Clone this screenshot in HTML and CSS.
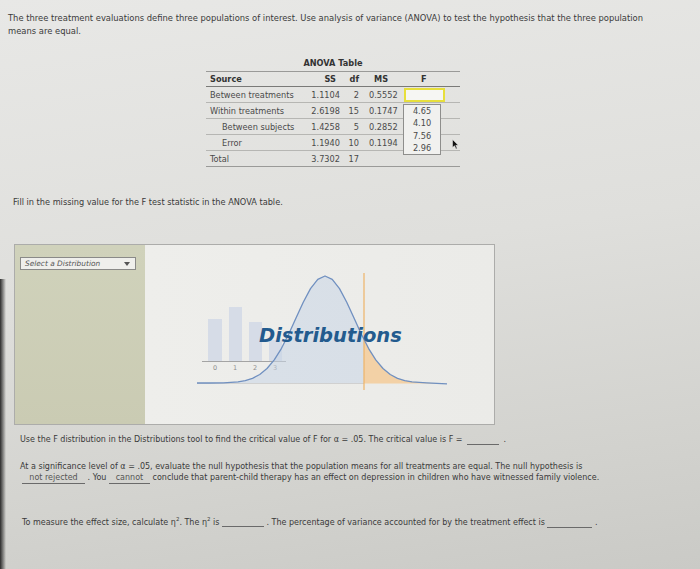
FILE: index.html
```html
<!DOCTYPE html>
<html>
<head>
<meta charset="utf-8">
<link rel="stylesheet" href="styles.css">
</head>
<body>
<div class="page">
  <p class="intro">The three treatment evaluations define three populations of interest. Use analysis of variance (ANOVA) to test the hypothesis that the three population<br>means are equal.</p>

  <div class="anova">
    <div class="anova-title">ANOVA Table</div>
    <table class="anova-table">
      <colgroup>
        <col class="c-src"><col class="c-ss"><col class="c-df"><col class="c-ms"><col class="c-f">
      </colgroup>
      <thead>
        <tr><th class="src">Source</th><th class="ss">SS</th><th class="df">df</th><th class="ms">MS</th><th class="f">F</th></tr>
      </thead>
      <tbody>
        <tr><td class="src">Between treatments</td><td class="ss">1.1104</td><td class="df">2</td><td class="ms">0.5552</td><td class="f"><div class="f-input"></div></td></tr>
        <tr><td class="src">Within treatments</td><td class="ss">2.6198</td><td class="df">15</td><td class="ms">0.1747</td><td class="f"></td></tr>
        <tr><td class="src sub">Between subjects</td><td class="ss">1.4258</td><td class="df">5</td><td class="ms">0.2852</td><td class="f"></td></tr>
        <tr><td class="src sub">Error</td><td class="ss">1.1940</td><td class="df">10</td><td class="ms">0.1194</td><td class="f"></td></tr>
        <tr><td class="src">Total</td><td class="ss">3.7302</td><td class="df">17</td><td class="ms"></td><td class="f"></td></tr>
      </tbody>
    </table>
    <ul class="f-options">
      <li>4.65</li><li>4.10</li><li>7.56</li><li>2.96</li>
    </ul>
    <svg class="cursor" width="7" height="11" viewBox="0 0 7 11"><path d="M0.5 0.5 L0.5 8.5 L2.5 6.8 L4 10 L5.2 9.4 L3.8 6.3 L6.3 6.3 Z" fill="#111" stroke="#eee" stroke-width="0.5"/></svg>
  </div>

  <p class="fill">Fill in the missing value for the F test statistic in the ANOVA table.</p>

  <div class="dist-panel">
    <div class="dist-side">
      <div class="dist-select"><span>Select a Distribution</span><span class="caret"></span></div>
    </div>
    <div class="dist-canvas">
      <svg width="349" height="179" viewBox="145 245 349 179">
        <rect x="208" y="319" width="14" height="42" fill="#d6dce7"/>
        <rect x="229" y="307" width="13" height="54" fill="#d6dce7"/>
        <rect x="249" y="322" width="13" height="39" fill="#d6dce7"/>
        <rect x="269" y="340" width="13" height="21" fill="#d6dce7"/>
        <line x1="202" y1="361.5" x2="286" y2="361.5" stroke="#a4a4a4" stroke-width="1"/>
        <text x="215" y="370" class="tick">0</text>
        <text x="235" y="370" class="tick">1</text>
        <text x="255" y="370" class="tick">2</text>
        <text x="275" y="370" class="tick">3</text>
        <polygon fill="#c8d5e6" fill-opacity="0.55" points="197,383 209,383 223.5,382.8 238,381.8 245.25,380.6 252.5,378.3 259.75,374.5 267,368.5 274.25,359.9 281.5,348.3 288.75,334 296,318.1 303.25,302.2 310.5,288.6 317.75,279.3 325,276 332.25,279.3 339.5,288.6 346.75,302.2 354,318.1 361.25,334 364,339.5 364,383"/>
        <polygon fill="#f5c88f" fill-opacity="0.75" points="364,339.5 368.5,348.3 375.75,359.9 383,368.5 390.25,374.5 397.5,378.3 404.75,380.6 412,381.8 426.5,382.8 447,383.5 364,383.5"/>
        <line x1="197" y1="383.5" x2="364" y2="383.5" stroke="#c9c9c9" stroke-width="0.8"/>
        <line x1="364" y1="273" x2="364" y2="390" stroke="#efb468" stroke-width="1.2"/>
        <polyline fill="none" stroke="#7090c0" stroke-width="1.3" stroke-linejoin="round" points="197,383 209,383 223.5,382.8 238,381.8 245.25,380.6 252.5,378.3 259.75,374.5 267,368.5 274.25,359.9 281.5,348.3 288.75,334 296,318.1 303.25,302.2 310.5,288.6 317.75,279.3 325,276 332.25,279.3 339.5,288.6 346.75,302.2 354,318.1 361.25,334 368.5,348.3 375.75,359.9 383,368.5 390.25,374.5 397.5,378.3 404.75,380.6 412,381.8 426.5,382.8 447,383.8"/>
        <text x="259" y="342" class="dist-title">Distributions</text>
      </svg>
    </div>
  </div>

  <p class="q q1">Use the F distribution in the Distributions tool to find the critical value of F for α = .05. The critical value is F = <span class="blank b-crit"></span> .</p>

  <p class="q q2">At a significance level of α = .05, evaluate the null hypothesis that the population means for all treatments are equal. The null hypothesis is<br><span class="blank filled b-rej">not rejected</span> . You <span class="blank filled b-can">cannot</span> conclude that parent-child therapy has an effect on depression in children who have witnessed family violence.</p>

  <p class="q q3">To measure the effect size, calculate η<sup>2</sup>. The η<sup>2</sup> is <span class="blank b-eta"></span> . The percentage of variance accounted for by the treatment effect is <span class="blank b-pct"></span> .</p>
</div>
</body>
</html>
```

FILE: styles.css
```css
html, body {
  margin: 0;
  padding: 0;
}

body {
  width: 700px;
  height: 569px;
  overflow: hidden;
  font-family: "DejaVu Sans", Verdana, sans-serif;
  color: #3a3a3a;
  background:
    linear-gradient(to right, rgba(25, 25, 25, 0.9), rgba(25, 25, 25, 0) 6px) left bottom / 8px 290px no-repeat,
    linear-gradient(172deg, #e8e8e6 0%, #dfdfdc 45%, #d2d2ce 80%, #cacac6 100%);
}

.page {
  padding: 0 0 0 8px;
}

p {
  margin: 0;
}

.intro {
  padding-top: 12px;
  font-size: 8.4px;
  line-height: 13px;
}

/* ANOVA table */
.anova {
  position: relative;
  margin: 19px 0 0 198px;
  width: 254px;
}

.anova-title {
  text-align: center;
  font-weight: bold;
  font-size: 8.2px;
  line-height: 13px;
  color: #333;
  margin-bottom: 1px;
}

.anova-table {
  border-collapse: collapse;
  table-layout: fixed;
  width: 254px;
  font-size: 8.2px;
  color: #4a4a4a;
  border-top: 1px solid #9a9a98;
  border-bottom: 1px solid #9a9a98;
}

.c-src { width: 98px; }
.c-ss { width: 36px; }
.c-df { width: 20px; }
.c-ms { width: 42px; }
.c-f { width: 58px; }

.anova-table th {
  font-weight: bold;
  color: #333;
  height: 14px;
  padding: 0;
  border-bottom: 1.5px solid #7a7a78;
}

.anova-table td {
  height: 15px;
  padding: 0;
  border-bottom: 1px solid #b6b6b3;
  white-space: nowrap;
}

.anova-table tr:last-child td {
  border-bottom: none;
}

.anova-table .src { text-align: left; padding-left: 4px; }
.anova-table .src.sub { padding-left: 16px; }
.anova-table .ss { text-align: right; padding-right: 0; }
.anova-table th.ss { text-align: right; padding-right: 4px; }
.anova-table .df { text-align: right; padding-right: 1px; }
.anova-table .ms { text-align: left; padding-left: 9px; }
.anova-table th.ms { padding-left: 14px; }
.anova-table .f { text-align: left; }
.anova-table th.f { text-align: left; padding-left: 19px; }

.f-input {
  width: 37px;
  height: 10px;
  margin-left: 2px;
  border: 2px solid #e7df3c;
  background: #f6f6f3;
}

.f-options {
  position: absolute;
  left: 197px;
  top: 47px;
  width: 36px;
  height: 49px;
  margin: 0;
  padding: 0;
  list-style: none;
  border: 1px solid #8e8e8c;
  background: #f1f1ef;
  font-size: 8.2px;
  line-height: 12.3px;
  text-align: center;
  color: #4a4a4a;
}

.cursor {
  position: absolute;
  left: 246px;
  top: 82px;
}

.fill {
  margin: 29px 0 0 5px;
  font-size: 8.2px;
  line-height: 12px;
}

/* Distributions tool */
.dist-panel {
  display: flex;
  margin: 36px 0 0 6px;
  width: 479px;
  height: 179px;
  border: 1px solid #acacaa;
  background: #ecece9;
}

.dist-side {
  width: 130px;
  background: linear-gradient(to bottom, #d0d2bb, #cacbb3);
  padding: 12px 0 0 5px;
  box-sizing: border-box;
}

.dist-select {
  display: flex;
  align-items: center;
  justify-content: space-between;
  width: 116px;
  height: 13px;
  box-sizing: border-box;
  border: 1px solid #8a8a88;
  background: #efefec;
  padding: 0 5px 0 4px;
  font-size: 7.4px;
  font-style: italic;
  color: #555;
}

.caret {
  width: 0;
  height: 0;
  border-left: 3.5px solid transparent;
  border-right: 3.5px solid transparent;
  border-top: 4px solid #555;
}

.dist-canvas {
  flex: 1;
  background: linear-gradient(to right, #eeeeeb, #ebebe8);
}

.dist-canvas svg {
  display: block;
}

.tick {
  font-family: "DejaVu Sans", sans-serif;
  font-size: 6.5px;
  fill: #8e8e8e;
  text-anchor: middle;
}

.dist-title {
  font-family: "DejaVu Sans", sans-serif;
  font-weight: bold;
  font-style: italic;
  font-size: 19.5px;
  fill: #235b8e;
}

/* Questions */
.q {
  font-size: 8px;
  color: #3a3a3a;
}

.q1 {
  margin: 7px 0 0 12px;
  line-height: 12px;
}

.q2 {
  margin: 15px 0 0 12px;
  line-height: 11px;
}

.q3 {
  margin: 31px 0 0 14px;
  line-height: 12px;
}

.q sup {
  font-size: 5.5px;
  line-height: 0;
}

.blank {
  display: inline-block;
  vertical-align: baseline;
  border-bottom: 1px solid #6a6a6a;
  height: 9px;
}

.blank.filled {
  height: auto;
  color: #555;
  text-align: center;
}

.b-crit { width: 32px; margin: 0 2px; position: relative; top: 3px; }
.b-rej { width: 63px; margin-left: 2px; }
.b-can { width: 41px; }
.b-eta { width: 42px; position: relative; top: 2px; }
.b-pct { width: 45px; position: relative; top: 3px; }
```
